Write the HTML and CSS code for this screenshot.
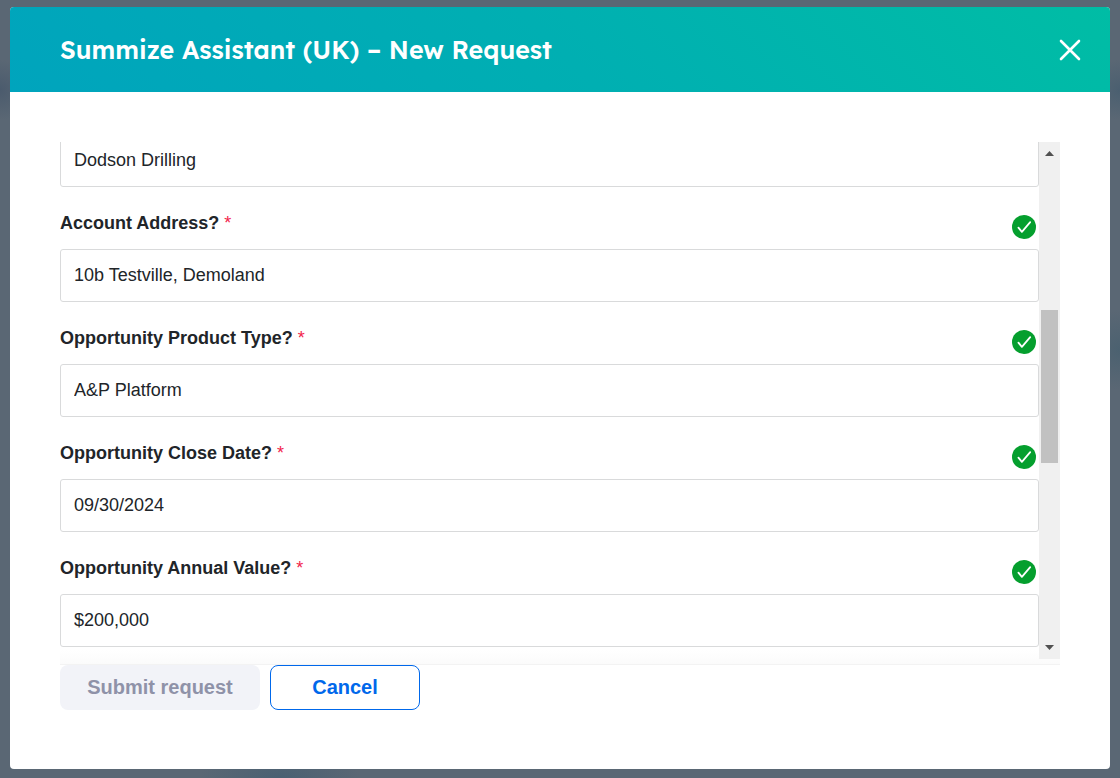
FILE: index.html
```
<!DOCTYPE html>
<html lang="en">
<head>
  <meta charset="UTF-8" />
  <title>Summize Assistant (UK) – New Request</title>
  <link rel="stylesheet" href="styles.css">
</head>
<body>

<svg class="sprite" aria-hidden="true">
  <symbol id="tick" viewBox="0 0 24 24">
    <circle cx="12" cy="12" r="12" fill="#059f2e" />
    <path d="M6.4 12.6l3.500 4.200 8.300-9.600" fill="none" stroke="#fff" stroke-width="1.8" stroke-linecap="round" stroke-linejoin="round" />
  </symbol>
</svg>

<div class="modal" role="dialog" aria-labelledby="modalTitle">
  <header class="modal-header">
    <h1 id="modalTitle">Summize Assistant (UK) – New Request</h1>
    <button class="close-btn" type="button" aria-label="Close">
      <svg width="22" height="22" viewBox="0 0 22 22">
        <path d="M2 2l18 18M20 2L2 20" fill="none" stroke="#fff" stroke-width="2.6" stroke-linecap="round" />
      </svg>
    </button>
  </header>

  <form class="modal-body">
    <div class="scroll-area">
      <div class="fields">
        <div class="field">
          <input type="text" class="text-input" aria-label="Account" value="Dodson Drilling" />
        </div>

        <div class="field">
          <div class="field-head">
            <label for="address">Account Address? <span class="required">*</span></label>
            <svg class="tick"><use href="#tick" /></svg>
          </div>
          <input type="text" class="text-input" id="address" value="10b Testville, Demoland" />
        </div>

        <div class="field">
          <div class="field-head">
            <label for="product">Opportunity Product Type? <span class="required">*</span></label>
            <svg class="tick"><use href="#tick" /></svg>
          </div>
          <input type="text" class="text-input" id="product" value="A&amp;P Platform" />
        </div>

        <div class="field">
          <div class="field-head">
            <label for="closeDate">Opportunity Close Date? <span class="required">*</span></label>
            <svg class="tick"><use href="#tick" /></svg>
          </div>
          <input type="text" class="text-input" id="closeDate" value="09/30/2024" />
        </div>

        <div class="field">
          <div class="field-head">
            <label for="annualValue">Opportunity Annual Value? <span class="required">*</span></label>
            <svg class="tick"><use href="#tick" /></svg>
          </div>
          <input type="text" class="text-input" id="annualValue" value="$200,000" />
        </div>
      </div>

      <div class="scrollbar" aria-hidden="true">
        <svg class="arrow" viewBox="0 0 9 5"><path d="M0 5L4.5 0 9 5z" /></svg>
        <div class="track">
          <div class="thumb"></div>
        </div>
        <svg class="arrow" viewBox="0 0 9 5"><path d="M0 0h9L4.5 5z" /></svg>
      </div>
    </div>

    <div class="actions">
      <button class="btn btn-submit" type="submit" disabled>Submit request</button>
      <button class="btn btn-cancel" type="button">Cancel</button>
    </div>
  </form>
</div>

</body>
</html>
```
FILE: styles.css
```
* {
  margin: 0;
  padding: 0;
  box-sizing: border-box;
}
body {
  display: flex;
  height: 100vh;
  padding: 7px 10px 9px;
  font-family: "Liberation Sans", Arial, sans-serif;
  font-size: 18px;
  color: #212529;
  background:
    radial-gradient(circle at 0 90px, #4b5b6d, transparent 30px),
    radial-gradient(circle at 100% 90px, #4a5f70, transparent 30px),
    radial-gradient(circle at 100% 350px, #4b6170, transparent 40px),
    radial-gradient(ellipse 80px 30px at 280px 100%, #4a6072, transparent),
    #5a6774;
}
.sprite {
  display: none;
}

.modal {
  flex: 1;
  display: flex;
  flex-direction: column;
  min-width: 0;
  background: #fff;
  border-radius: 4px;
  overflow: hidden;
}
.modal-header {
  display: flex;
  align-items: center;
  justify-content: space-between;
  height: 85px;
  padding: 0 29px 0 50px;
  color: #fff;
  background: linear-gradient(45deg, #00a4bd, #00afb2 50%, #00bda5);
}
h1 {
  font-family: Lexend, "Open Sans", sans-serif;
  font-size: 25px;
  font-weight: 600;
}
.close-btn {
  display: flex;
  border: none;
  background: none;
  cursor: pointer;
}

.modal-body {
  flex: 1;
  display: flex;
  flex-direction: column;
  min-height: 0;
  padding: 50px 50px 59px;
}
.scroll-area {
  flex: 1;
  display: flex;
  min-height: 0;
  padding-bottom: 5px;
  border-bottom: 1px solid #f3f3f3;
  background: linear-gradient(to top, #fbfbfb, #fff 14px);
}
/* scrolled part way down, so the first field is cut off at the top */
.fields {
  flex: 1;
  display: flex;
  flex-direction: column;
  justify-content: flex-end;
  padding-bottom: 12px;
  overflow: hidden;
}
.field-head {
  display: flex;
  align-items: flex-start;
  justify-content: space-between;
  height: 62px;
  padding: 24px 3px 0 0;
}
.field-head label {
  font-weight: bold;
  line-height: 24px;
}
.required {
  font-weight: normal;
  color: #f2244b;
}
.tick {
  width: 24px;
  height: 24px;
  margin-top: 4px;
}
.text-input {
  display: block;
  width: 100%;
  height: 53px;
  padding: 0 13px;
  font: inherit;
  color: #212529;
  background: #fff;
  border: 1px solid #d9dadb;
  border-radius: 3px;
}

.scrollbar {
  display: flex;
  flex-direction: column;
  align-items: center;
  width: 21px;
  padding: 9px 0;
  background: #f0f0f0;
}
.arrow {
  width: 9px;
  height: 5px;
  fill: #505050;
}
.track {
  flex: 1;
  display: flex;
  flex-direction: column;
}
.track::before {
  content: "";
  flex: 154;
}
.track::after {
  content: "";
  flex: 182;
}
.thumb {
  flex: 153;
  width: 17px;
  background: #c1c1c1;
}

.actions {
  display: flex;
  gap: 10px;
}
.btn {
  height: 45px;
  font-family: inherit;
  font-size: 20px;
  font-weight: bold;
  border: none;
  border-radius: 8px;
}
.btn-submit {
  width: 200px;
  color: #8f92a8;
  background: #f2f3f8;
}
.btn-cancel {
  width: 150px;
  color: #0068eb;
  background: #fff;
  border: 1px solid #0068eb;
  cursor: pointer;
}
```
